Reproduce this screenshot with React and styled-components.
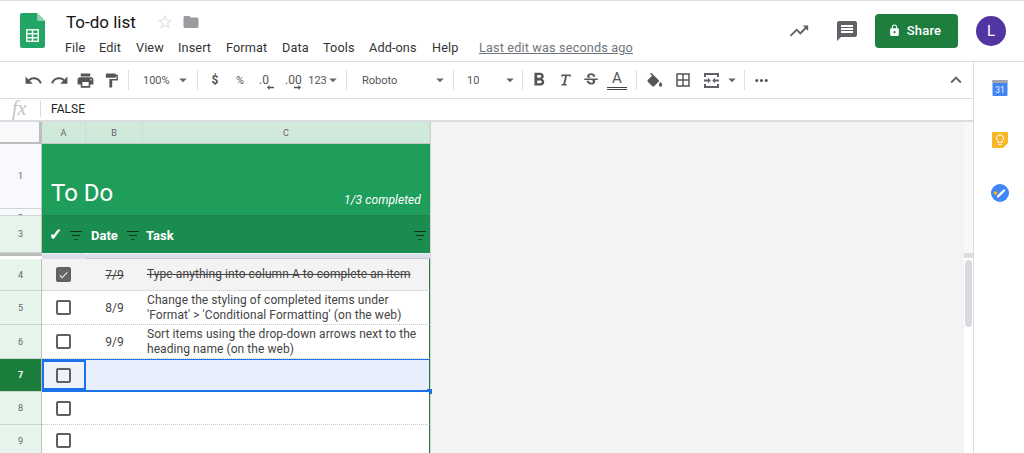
import React from 'react';
import styled, { createGlobalStyle } from 'styled-components';
import {
  MdUndo, MdRedo, MdPrint, MdFormatPaint, MdFormatBold, MdStrikethroughS,
  MdBorderAll, MdMoreHoriz, MdExpandLess, MdTrendingUp, MdMessage,
  MdLock, MdStarBorder, MdFolder, MdArrowDropDown, MdCheck,
} from 'react-icons/md';

const GlobalStyle = createGlobalStyle`
  html, body { margin: 0; padding: 0; background: #fff; }
  body { font-family: Roboto, "Liberation Sans", sans-serif; color: #222; }
  * { box-sizing: border-box; }
`;

const Page = styled.div`
  width: 1024px;
  height: 453px;
  overflow: hidden;
  display: flex;
  flex-direction: column;
  border-top: 1px solid #e0e0e0;
`;

const Header = styled.header`
  height: 61px;
  flex: none;
  display: flex;
  align-items: flex-start;
  border-bottom: 1px solid #dadce0;
`;

const LogoWrap = styled.div`
  width: 66px;
  padding: 12px 0 0 20px;
  flex: none;
`;

const TitleArea = styled.div`
  flex: 1;
  display: flex;
  flex-direction: column;
`;

const TitleRow = styled.div`
  display: flex;
  align-items: center;
  height: 22px;
  margin-top: 10px;
`;

const DocTitle = styled.div`
  font-size: 17px;
  color: #111;
  width: 90px;
`;

const StarIcon = styled(MdStarBorder)`
  color: #e2e2e2;
  font-size: 18px;
`;

const FolderIcon = styled(MdFolder)`
  color: #9a9ca0;
  font-size: 18px;
  margin-left: 8px;
`;

const MenuRow = styled.nav`
  display: flex;
  align-items: center;
  margin: 7px 0 0 -1px;
  font-size: 12.7px;
  color: #333;
`;

const MenuItem = styled.span`
  width: ${(p) => p.$w}px;
  letter-spacing: 0.1px;
`;

const LastEdit = styled.span`
  color: #70757a;
  text-decoration: underline;
  margin-left: 4px;
  letter-spacing: 0.15px;
`;

const HeaderRight = styled.div`
  display: flex;
  align-items: center;
  height: 60px;
  flex: none;
  padding-right: 18px;
  padding-bottom: 1px;
`;

const TrendIcon = styled(MdTrendingUp)`
  color: #5f6368;
  font-size: 22px;
`;

const CommentIcon = styled(MdMessage)`
  color: #5f6368;
  font-size: 24px;
  margin-left: 25px;
`;

const ShareButton = styled.div`
  width: 83px;
  height: 34px;
  margin-left: 16px;
  padding-right: 4px;
  background: #1e7e3e;
  border-radius: 4px;
  color: #fff;
  font-size: 13px;
  font-weight: 500;
  display: flex;
  align-items: center;
  justify-content: center;
  gap: 6px;
  letter-spacing: 0.2px;
`;

const Avatar = styled.div`
  width: 30px;
  height: 30px;
  margin-left: 18px;
  border-radius: 50%;
  background: #5135a3;
  color: #fff;
  font-size: 15px;
  display: flex;
  align-items: center;
  justify-content: center;
`;

const Body = styled.div`
  flex: 1;
  display: flex;
  min-height: 0;
`;

const Main = styled.main`
  flex: 1;
  display: flex;
  flex-direction: column;
  min-width: 0;
`;

const Toolbar = styled.div`
  height: 37px;
  flex: none;
  display: flex;
  align-items: center;
  padding-left: 20px;
  border-bottom: 1px solid #dadce0;
  color: #5f6368;
`;

const ToolButton = styled.div`
  width: ${(p) => p.$w || 26}px;
  height: 24px;
  flex: none;
  display: flex;
  align-items: center;
  justify-content: ${(p) => (p.$pl !== undefined ? 'flex-start' : 'center')};
  padding-left: ${(p) => p.$pl || 0}px;
  font-size: ${(p) => p.$size || 11}px;
  font-weight: ${(p) => (p.$bold ? 700 : 400)};
  color: #555;
  position: relative;
`;

const Caret = styled(MdArrowDropDown)`
  font-size: 18px;
  color: #666;
  flex: none;
  margin-left: ${(p) => (p.$tight ? '-3px' : 'auto')};
`;

const Divider = styled.div`
  width: 1px;
  height: 20px;
  flex: none;
  background: #e0e0e0;
  margin: 0 ${(p) => p.$m ?? 4}px;
`;

const SubArrow = styled.svg`
  position: absolute;
  left: ${(p) => p.$x}px;
  top: 17px;
`;

const TextColorGlyph = styled.span`
  width: 20px;
  font-size: 15px;
  line-height: 17px;
  text-align: center;
  color: #555;
  border-bottom: 3px double #444;
`;

const Collapse = styled(MdExpandLess)`
  margin-left: auto;
  margin-right: 6px;
  font-size: 22px;
  color: #5f6368;
`;

const FormulaBar = styled.div`
  height: 23px;
  flex: none;
  display: flex;
  align-items: center;
  padding-bottom: 1px;
  border-bottom: 2px solid #dadce0;
`;

const FxLabel = styled.span`
  width: 41px;
  height: 16px;
  flex: none;
  padding-left: 12px;
  font-family: "Liberation Serif", serif;
  font-style: italic;
  font-size: 20px;
  line-height: 15px;
  color: #c4c4c4;
  border-right: 1px solid #dadce0;
`;

const FormulaText = styled.span`
  font-size: 12px;
  letter-spacing: 0.05px;
  color: #222;
  padding-left: 10px;
`;

const GridArea = styled.div`
  flex: 1;
  display: flex;
  min-height: 0;
`;

const Sheet = styled.div`
  width: 431px;
  flex: none;
  display: flex;
  flex-direction: column;
  border-right: 1px solid #d4d4d4;
`;

const Backdrop = styled.div`
  flex: 1;
  background: #f3f3f3;
`;

const ScrollTrack = styled.div`
  width: 9px;
  flex: none;
  display: flex;
  flex-direction: column;
  background: #fff;
`;

const ScrollTop = styled.div`
  height: 136px;
  flex: none;
  background: #f8f8f8;
  border-bottom: 5px solid #dcdee3;
`;

const ScrollThumb = styled.div`
  height: 67px;
  margin: 2px 1px 0 1px;
  border-radius: 4px;
  background: #d9dadf;
`;

const ColumnRow = styled.div`
  height: 22px;
  flex: none;
  display: grid;
  grid-template-columns: 42px 44px 57px 287px;
  border-bottom: 1px solid #c6c6c6;
`;

const Corner = styled.div`
  background: #f8f9fa;
  border-right: 3px solid #bdbdbd;
  border-bottom: 2px solid #bdbdbd;
  margin-bottom: -1px;
`;

const ColHead = styled.div`
  background: #d0e9da;
  border-right: 1px solid #c8e0d2;
  font-size: 9px;
  color: #666;
  display: flex;
  align-items: center;
  justify-content: center;
`;

const RowHead = styled.div`
  width: 42px;
  flex: none;
  height: ${(p) => (p.$h ? `${p.$h}px` : 'auto')};
  display: flex;
  align-items: ${(p) => (p.$clip ? 'flex-start' : 'center')};
  justify-content: center;
  padding-top: ${(p) => (p.$clip ? 4 : 0)}px;
  font-size: 9px;
  overflow: hidden;
  color: ${(p) => (p.$active ? '#fff' : '#666')};
  font-weight: ${(p) => (p.$active ? 700 : 400)};
  background: ${(p) => (p.$active ? '#1b7e3c' : p.$plain ? '#f8f9fc' : '#e7f4ec')};
  border-right: 1px solid #bfc4c0;
  border-bottom: 1px solid #cfd3cf;
`;

const TitleBlock = styled.div`
  height: 72px;
  flex: none;
  display: flex;
`;

const HeadStack = styled.div`
  display: flex;
  flex-direction: column;
  flex: none;
`;

const Banner = styled.div`
  flex: 1;
  background: #1f9d5b;
  display: flex;
  align-items: flex-end;
  justify-content: space-between;
  padding: 0 9px 8px 9px;
  color: #fff;
  border-bottom: 1px solid #1b8450;
`;

const BannerTitle = styled.span`
  font-size: 24px;
  line-height: 28px;
`;

const BannerNote = styled.span`
  font-size: 12px;
  font-style: italic;
  letter-spacing: 0.08px;
  line-height: 18px;
  margin-bottom: -2px;
`;

const HeadRow = styled.div`
  height: 37px;
  flex: none;
  display: flex;
`;

const HeadCells = styled.div`
  flex: 1;
  background: #1b8c50;
  display: flex;
  align-items: center;
  padding-top: 1px;
  color: #fff;
  font-size: 13px;
  font-weight: 700;
`;

const HeadCell = styled.div`
  width: ${(p) => p.$w}px;
  flex: ${(p) => (p.$grow ? 1 : 'none')};
  display: flex;
  align-items: center;
  justify-content: space-between;
  padding: 0 ${(p) => p.$pr ?? 4}px 0 ${(p) => p.$pl ?? 4}px;
`;

const CheckMark = styled.span`
  font-size: 16px;
  line-height: 16px;
  font-family: "DejaVu Sans", sans-serif;
  -webkit-text-stroke: 0.7px #fff;
`;

const FilterSvg = styled.svg`
  flex: none;
`;

const FreezeBar = styled.div`
  height: 6px;
  flex: none;
  display: flex;
`;

const FreezeHead = styled.div`
  width: 42px;
  flex: none;
  height: 3px;
  background: #bdbdbd;
`;

const FreezeFirst = styled.div`
  width: 44px;
  flex: none;
  background: #dcdfe9;
  border-top: 1px dotted #fff;
`;

const FreezeRest = styled.div`
  flex: 1;
  background: #dcdfe9;
  border-top: 1px dotted #fff;
  border-bottom: 1px solid #c3c7cf;
`;

const Row = styled.div`
  height: ${(p) => p.$h}px;
  flex: none;
  display: flex;
`;

const Cells = styled.div`
  flex: 1;
  display: grid;
  grid-template-columns: 44px 57px 1fr;
  align-items: center;
  position: relative;
  background: ${(p) => (p.$active ? '#e8eefb' : p.$done ? '#f3f3f3' : '#fff')};
  border-bottom: ${(p) => (p.$active ? '2px solid #1a73e8' : '1px dotted #c8c8c8')};
  border-top: ${(p) => (p.$active ? '1px solid #1a73e8' : 'none')};
  border-right: 1px solid #1b7e3c;
`;

const CheckCell = styled.div`
  display: flex;
  align-items: center;
  justify-content: center;
  height: 100%;
  padding-right: 1px;
  border: ${(p) => (p.$active ? '2px solid #1a73e8' : 'none')};
  background: ${(p) => (p.$active ? '#edf2fc' : 'transparent')};
`;

const Box = styled.div`
  width: 15px;
  height: 15px;
  border: 2px solid #5f6064;
  border-radius: 2px;
  background: ${(p) => (p.$on ? '#666' : 'transparent')};
  display: flex;
  align-items: center;
  justify-content: center;
  color: #fff;
  font-size: 14px;
`;

const DateCell = styled.div`
  font-size: 12px;
  color: #444;
  text-align: center;
  text-decoration: ${(p) => (p.$done ? 'line-through' : 'none')};
`;

const TaskCell = styled.div`
  font-size: 12px;
  line-height: 15px;
  letter-spacing: 0.07px;
  color: #444;
  padding-left: 4px;
  white-space: nowrap;
  text-decoration: ${(p) => (p.$done ? 'line-through' : 'none')};
`;

const Handle = styled.div`
  position: absolute;
  right: -3px;
  bottom: -4px;
  width: 5px;
  height: 5px;
  background: #1a73e8;
`;

const SidePanel = styled.aside`
  width: 51px;
  flex: none;
  border-left: 1px solid #dadce0;
  display: flex;
  flex-direction: column;
  align-items: center;
  padding: 18px 0 0 1px;
  gap: 36px;
`;

const FontLabel = styled.span`
  color: #555;
`;

const menus = [
  ['File', 34], ['Edit', 37], ['View', 42], ['Insert', 48], ['Format', 56],
  ['Data', 41], ['Tools', 46], ['Add-ons', 63], ['Help', 43],
];

const tasks = [
  { n: 4, h: 32, done: true, date: '7/9', text: ['Type anything into column A to complete an item'] },
  { n: 5, h: 34, date: '8/9', text: ['Change the styling of completed items under', "'Format' > 'Conditional Formatting' (on the web)"] },
  { n: 6, h: 34, date: '9/9', text: ['Sort items using the drop-down arrows next to the', 'heading name (on the web)'] },
  { n: 7, h: 33, active: true },
  { n: 8, h: 33 },
  { n: 9, h: 32 },
];

const SheetsLogo = () => (
  <svg width="25" height="35" viewBox="0 0 25 35">
    <path d="M2 0h15l8 8v24.500a2.500 2.500 0 0 1-2.500 2.500h-20.500a2 2 0 0 1-2-2v-31a2 2 0 0 1 2-2z" fill="#23a566" />
    <path d="M17 0l8 8h-6a2 2 0 0 1-2-2z" fill="#8ed1b1" />
    <path d="M6 16h13v13h-13z M7.500 17.500v2.500h4.200v-2.500z M13.300 17.500v2.500h4.200v-2.500z M7.500 21.500v2.500h4.200v-2.500z M13.300 21.500v2.500h4.200v-2.500z M7.500 25.500v2h4.200v-2z M13.300 25.500v2h4.200v-2z" fill="#f1f8f4" fillRule="evenodd" />
  </svg>
);

const FilterIcon = () => (
  <FilterSvg width="12" height="9" viewBox="0 0 12 9" fill="#10301f">
    <path d="M0 0h12v1h-12z M2 4h8v1h-8z M4.500 8h3v1h-3z" />
  </FilterSvg>
);

const ItalicIcon = () => (
  <svg width="14" height="14" viewBox="0 0 14 14" fill="#555">
    <path d="M3.500 1.500h9.500l-.6 2.500h-1l.2-1h-2.600l-1.800 8h1.500l-.3 1.500h-5l.3-1.500h1.600l1.800-8h-2.600l-.2 1h-1z" />
  </svg>
);

const FillIcon = () => (
  <svg width="18" height="18" viewBox="0 0 22 18" fill="#555">
    <path d="M16.560 8.940L7.620 0 6.210 1.410l2.380 2.380-5.150 5.150c-.59.590-.59 1.540 0 2.120l5.500 5.500c.29.290.68.440 1.060.440s.77-.150 1.060-.440l5.500-5.500c.59-.580.59-1.530 0-2.120z" />
    <path d="M19 11.500s-2 2.170-2 3.500c0 1.100.9 2 2 2s2-.9 2-2c0-1.330-2-3.500-2-3.500z" />
  </svg>
);

const MergeIcon = () => (
  <svg width="17" height="17" viewBox="0 0 17 17" fill="#5f6368">
    <path d="M1 1h15v2h-15z M1 14h15v2h-15z M1 3h2v2h-2z M1 12h2v2h-2z M14 3h2v2h-2z M14 12h2v2h-2z" />
    <path d="M1 7.500h4v-1.800l2.800 2.800-2.800 2.800v-1.800h-4z M16 7.500h-4v-1.800l-2.800 2.800 2.800 2.800v-1.800h4z" />
  </svg>
);

const LeftArrow = () => (
  <SubArrow $x={14} width="7" height="5" viewBox="0 0 7 5" fill="#555">
    <path d="M0 2.500l2.500-2.500v1.800h4.500v1.400h-4.500v1.800z" />
  </SubArrow>
);

const RightArrow = () => (
  <SubArrow $x={15} width="7" height="5" viewBox="0 0 7 5" fill="#555">
    <path d="M7 2.500l-2.500-2.500v1.800h-4.500v1.400h4.500v1.800z" />
  </SubArrow>
);

const CalendarIcon = () => (
  <svg width="16" height="16" viewBox="0 0 16 16">
    <rect x="0.500" width="15" height="16" rx="1" fill="#4285f4" />
    <rect x="0.500" width="15" height="3" fill="#a6a8ad" />
    <text x="8" y="12.500" textAnchor="middle" fontSize="8.500" fontFamily="Roboto, sans-serif" fill="#e8f0fe">31</text>
  </svg>
);

const KeepIcon = () => (
  <svg width="16" height="16" viewBox="0 0 16 16">
    <path d="M1 0h14a1 1 0 0 1 1 1v10l-5 5h-10a1 1 0 0 1-1-1v-14a1 1 0 0 1 1-1z" fill="#f6b72a" />
    <path d="M8 3a3.300 3.300 0 0 0-2 6v1.500h4v-1.500a3.300 3.300 0 0 0-2-6z" fill="none" stroke="#fff" strokeWidth="1" />
    <path d="M6.500 12h3v1h-3z" fill="#fff" />
  </svg>
);

const TasksIcon = () => (
  <svg width="18" height="18" viewBox="0 0 18 18">
    <circle cx="9" cy="9" r="9" fill="#4285f4" />
    <circle cx="4.500" cy="9" r="1.800" fill="#fbbc04" />
    <path d="M7 12.500l6-6" stroke="#fff" strokeWidth="2.400" strokeLinecap="round" />
  </svg>
);

const App = () => (
  <Page>
    <GlobalStyle />
    <Header>
      <LogoWrap><SheetsLogo /></LogoWrap>
      <TitleArea>
        <TitleRow>
          <DocTitle>To-do list</DocTitle>
          <StarIcon />
          <FolderIcon />
        </TitleRow>
        <MenuRow>
          {menus.map(([label, w]) => <MenuItem key={label} $w={w}>{label}</MenuItem>)}
          <LastEdit>Last edit was seconds ago</LastEdit>
        </MenuRow>
      </TitleArea>
      <HeaderRight>
        <TrendIcon />
        <CommentIcon />
        <ShareButton><MdLock size={13} />Share</ShareButton>
        <Avatar>L</Avatar>
      </HeaderRight>
    </Header>
    <Body>
      <Main>
        <Toolbar>
          <ToolButton><MdUndo size={19} /></ToolButton>
          <ToolButton><MdRedo size={19} /></ToolButton>
          <ToolButton><MdPrint size={19} /></ToolButton>
          <ToolButton><MdFormatPaint size={17} /></ToolButton>
          <Divider />
          <ToolButton $w={59} $pl={10}><FontLabel>100%</FontLabel><Caret /></ToolButton>
          <Divider $m={5} />
          <ToolButton $w={24} $bold $size={12}>$</ToolButton>
          <ToolButton $size={11}>%</ToolButton>
          <ToolButton $w={26} $pl={6} $size={12}>.0<LeftArrow /></ToolButton>
          <ToolButton $w={28} $pl={6} $size={12}>.00<RightArrow /></ToolButton>
          <ToolButton $w={36} $size={11}>123<Caret $tight /></ToolButton>
          <Divider $m={3} />
          <ToolButton $w={99} $pl={12}><FontLabel>Roboto</FontLabel><Caret /></ToolButton>
          <Divider $m={4} />
          <ToolButton $w={61} $pl={9}><FontLabel>10</FontLabel><Caret /></ToolButton>
          <Divider $m={3} />
          <ToolButton><MdFormatBold size={22} /></ToolButton>
          <ToolButton><ItalicIcon /></ToolButton>
          <ToolButton><MdStrikethroughS size={18} /></ToolButton>
          <ToolButton><TextColorGlyph>A</TextColorGlyph></ToolButton>
          <Divider $m={6} />
          <ToolButton $w={22}><FillIcon /></ToolButton>
          <ToolButton $w={36}><MdBorderAll size={18} /></ToolButton>
          <ToolButton $w={20}><MergeIcon /></ToolButton>
          <ToolButton $w={20}><Caret /></ToolButton>
          <Divider $m={3} />
          <ToolButton $w={26}><MdMoreHoriz size={19} /></ToolButton>
          <Collapse />
        </Toolbar>
        <FormulaBar>
          <FxLabel>fx</FxLabel>
          <FormulaText>FALSE</FormulaText>
        </FormulaBar>
        <GridArea>
          <Sheet>
            <ColumnRow>
              <Corner />
              <ColHead>A</ColHead>
              <ColHead>B</ColHead>
              <ColHead>C</ColHead>
            </ColumnRow>
            <TitleBlock>
              <HeadStack>
                <RowHead $plain $h={65}>1</RowHead>
                <RowHead $plain $clip $h={7}>2</RowHead>
              </HeadStack>
              <Banner>
                <BannerTitle>To Do</BannerTitle>
                <BannerNote>1/3 completed</BannerNote>
              </Banner>
            </TitleBlock>
            <HeadRow>
              <RowHead>3</RowHead>
              <HeadCells>
                <HeadCell $w={44} $pl={7} $pr={4}><CheckMark>✓</CheckMark><FilterIcon /></HeadCell>
                <HeadCell $w={56} $pl={5} $pr={3}><span>Date</span><FilterIcon /></HeadCell>
                <HeadCell $grow $pr={4}><span>Task</span><FilterIcon /></HeadCell>
              </HeadCells>
            </HeadRow>
            <FreezeBar>
              <FreezeHead />
              <FreezeFirst />
              <FreezeRest />
            </FreezeBar>
            {tasks.map((t) => (
              <Row key={t.n} $h={t.h}>
                <RowHead $active={t.active}>{t.n}</RowHead>
                <Cells $active={t.active} $done={t.done}>
                  <CheckCell $active={t.active}>
                    <Box $on={t.done}>{t.done && <MdCheck />}</Box>
                  </CheckCell>
                  <DateCell $done={t.done}>{t.date}</DateCell>
                  <TaskCell $done={t.done}>
                    {t.text && t.text.map((line) => <div key={line}>{line}</div>)}
                  </TaskCell>
                  {t.active && <Handle />}
                </Cells>
              </Row>
            ))}
          </Sheet>
          <Backdrop />
          <ScrollTrack>
            <ScrollTop />
            <ScrollThumb />
          </ScrollTrack>
        </GridArea>
      </Main>
      <SidePanel>
        <CalendarIcon />
        <KeepIcon />
        <TasksIcon />
      </SidePanel>
    </Body>
  </Page>
);

export default App;
